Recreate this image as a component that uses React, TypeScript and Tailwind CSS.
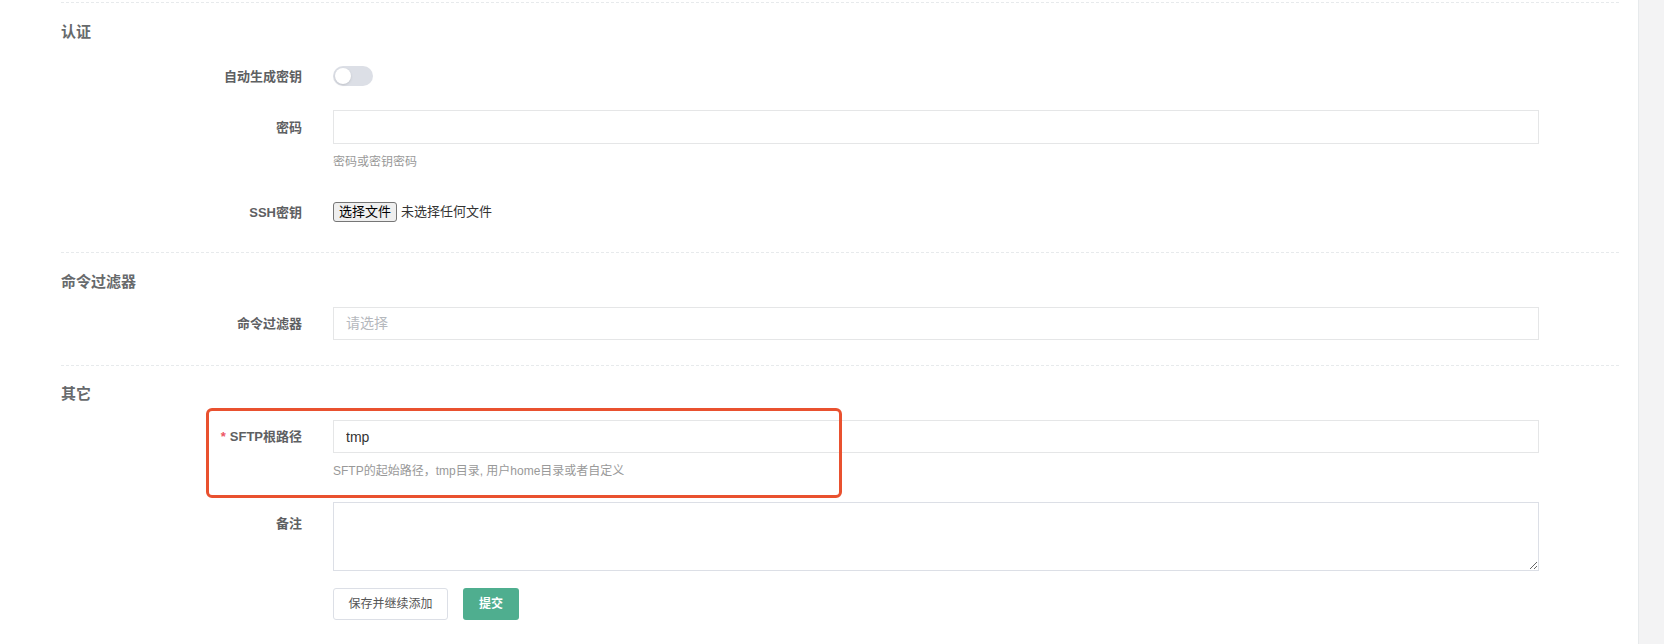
const font = '"Liberation Sans", "Noto Sans CJK SC", sans-serif';

function Label({ children, required }: { children: React.ReactNode; required?: boolean }) {
  return (
    <div className="w-[241px] shrink-0 text-right text-[13px] font-bold leading-[17px] text-[#5e6062]">
      {required && <span className="mr-[4px] text-[#ed5565]">*</span>}
      {children}
    </div>
  );
}

function Heading({ children, className }: { children: React.ReactNode; className?: string }) {
  return (
    <h3 className={`text-[15px] font-semibold leading-[20px] text-[#676a6c] ${className ?? ''}`}>
      {children}
    </h3>
  );
}

function Divider({ className }: { className?: string }) {
  return <div className={`border-t border-dashed border-[#e7eaec] ${className ?? ''}`} />;
}

export default function App() {
  return (
    <div className="flex min-h-screen bg-white" style={{ fontFamily: font }}>
      <main className="flex-1 pl-[61px] pr-[19px]">
        <Divider className="mt-[2px]" />

        {/* 认证 */}
        <Heading className="mt-[19px]">认证</Heading>

        <div className="mt-[24px] flex h-[20px] items-center">
          <Label>自动生成密钥</Label>
          <div className="ml-[31px] flex h-[20px] w-[40px] items-center rounded-full bg-[#dcdfe6] px-[2px]">
            <div className="h-[16px] w-[16px] rounded-full bg-white shadow-sm" />
          </div>
        </div>

        <div className="mt-[24px] flex items-center">
          <Label>密码</Label>
          <div className="ml-[31px] mr-[80px] flex-1">
            <input
              type="password"
              className="block h-[34px] w-full border border-[#e5e6e7] px-[12px] text-[14px] outline-none"
            />
          </div>
        </div>
        <div className="ml-[272px] mt-[10px] text-[12px] leading-[17px] text-[#999]">
          密码或密钥密码
        </div>

        <div className="mt-[31px] flex h-[20px] items-center">
          <Label>SSH密钥</Label>
          <div className="ml-[31px] flex items-center text-[13px]">
            <button className="h-[20px] rounded-[3px] border border-[#767676] bg-[#efefef] px-[5px] leading-[18px] text-black">
              选择文件
            </button>
            <span className="ml-[4px] text-[#333]">未选择任何文件</span>
          </div>
        </div>

        <Divider className="mt-[30px]" />

        {/* 命令过滤器 */}
        <Heading className="mt-[19px]">命令过滤器</Heading>

        <div className="mt-[15px] flex items-center">
          <Label>命令过滤器</Label>
          <div className="ml-[31px] mr-[80px] flex-1">
            <div className="flex h-[33px] w-full items-center border border-[#e5e6e7] px-[12px] text-[14px] text-[#b5b8bd]">
              请选择
            </div>
          </div>
        </div>

        <Divider className="mt-[25px]" />

        {/* 其它 */}
        <Heading className="mt-[18px]">其它</Heading>

        <div className="relative mt-[16px]">
          <div className="flex items-center">
            <Label required>SFTP根路径</Label>
            <div className="ml-[31px] mr-[80px] flex-1">
              <input
                defaultValue="tmp"
                className="block h-[33px] w-full border border-[#e5e6e7] px-[12px] text-[14px] text-[#333] outline-none"
              />
            </div>
          </div>
          <div className="ml-[272px] mt-[10px] text-[12px] leading-[17px] text-[#999]">
            SFTP的起始路径，tmp目录, 用户home目录或者自定义
          </div>
          <div className="pointer-events-none absolute left-[145px] top-[-12px] h-[90px] w-[636px] rounded-[6px] border-[3px] border-[#e9512f]" />
        </div>

        <div className="mt-[22px] flex items-start">
          <div className="pt-[13px]">
            <Label>备注</Label>
          </div>
          <div className="ml-[31px] mr-[80px] flex-1">
            <textarea className="block h-[69px] w-full border border-[#dcdfe6] px-[12px] py-[6px] text-[14px] outline-none" />
          </div>
        </div>

        <div className="ml-[272px] mt-[17px] flex gap-[15px]">
          <button className="h-[32px] w-[115px] rounded-[3px] border border-[#dcdfe6] bg-white text-[12px] text-[#555]">
            保存并继续添加
          </button>
          <button className="h-[32px] w-[56px] rounded-[3px] bg-[#4fae8f] text-[12px] font-bold text-white">
            提交
          </button>
        </div>
      </main>
      <aside className="w-[26px] shrink-0 border-l border-[#e7eaec] bg-[#f3f3f4]" />
    </div>
  );
}
